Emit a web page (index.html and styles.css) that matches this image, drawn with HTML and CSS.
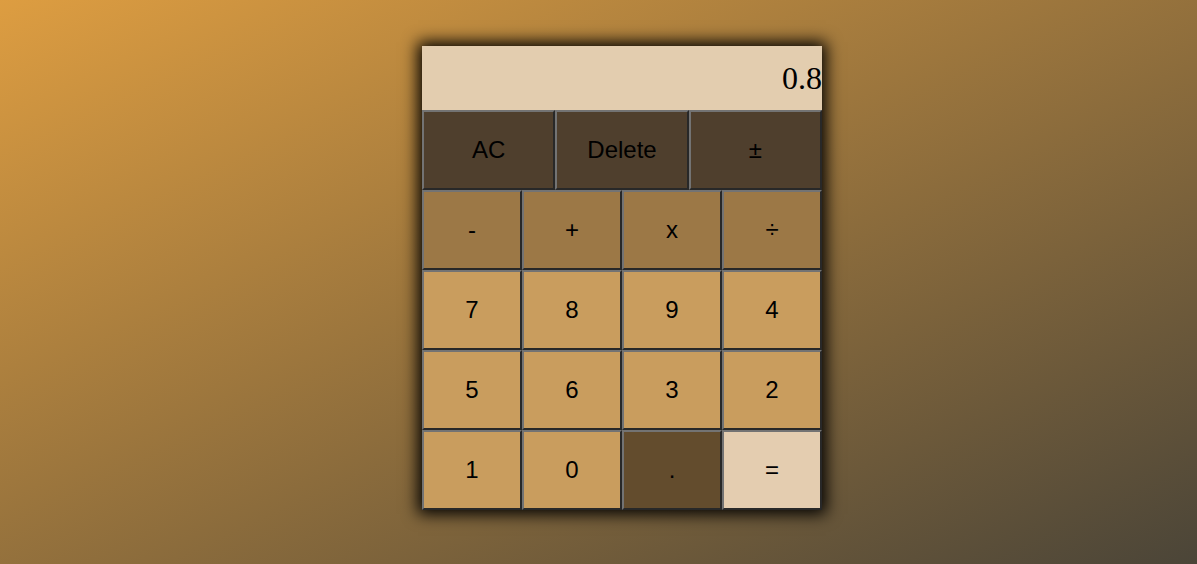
FILE: index.html
```html
<!DOCTYPE html>
<html>
<head>
<meta charset="utf-8">
<link rel="stylesheet" href="styles.css">
</head>
<body>
<div class="calc">
  <div class="display">0.8</div>
  <div class="keys">
    <button class="key wide top">AC</button>
    <button class="key wide top">Delete</button>
    <button class="key wide top">±</button>
    <button class="key op">-</button>
    <button class="key op">+</button>
    <button class="key op">x</button>
    <button class="key op">÷</button>
    <button class="key num">7</button>
    <button class="key num">8</button>
    <button class="key num">9</button>
    <button class="key num">4</button>
    <button class="key num">5</button>
    <button class="key num">6</button>
    <button class="key num">3</button>
    <button class="key num">2</button>
    <button class="key num">1</button>
    <button class="key num">0</button>
    <button class="key dot">.</button>
    <button class="key eq">=</button>
  </div>
</div>
</body>
</html>
```
FILE: styles.css
```css
html, body {
  margin: 0;
  height: 100%;
}
body {
  background: linear-gradient(to bottom right, #dd9d41, #4b4538);
  overflow: hidden;
}
.calc {
  width: 400px;
  margin: 46px 0 0 422px;
  box-shadow: 0 0 15px 4px #000;
}
.display {
  height: 64px;
  background: #e3cdaf;
  display: flex;
  align-items: center;
  justify-content: flex-end;
  font-family: "Liberation Serif", "Times New Roman", serif;
  font-size: 32px;
  color: #000;
}
.keys {
  display: grid;
  grid-template-columns: repeat(12, 1fr);
  grid-auto-rows: 80px;
}
.key {
  grid-column: span 3;
  box-sizing: border-box;
  margin: 0;
  padding: 0;
  border: 2px solid;
  border-color: #737373 #282828 #282828 #737373;
  font-family: "Liberation Sans", Arial, sans-serif;
  font-size: 24px;
  color: #000;
}
.wide { grid-column: span 4; }
.top { background: #4f3f2d; }
.op { background: #9c7846; }
.num { background: #c99d5e; }
.dot { background: #634c2d; }
.eq { background: #e4cdb0; }
```
